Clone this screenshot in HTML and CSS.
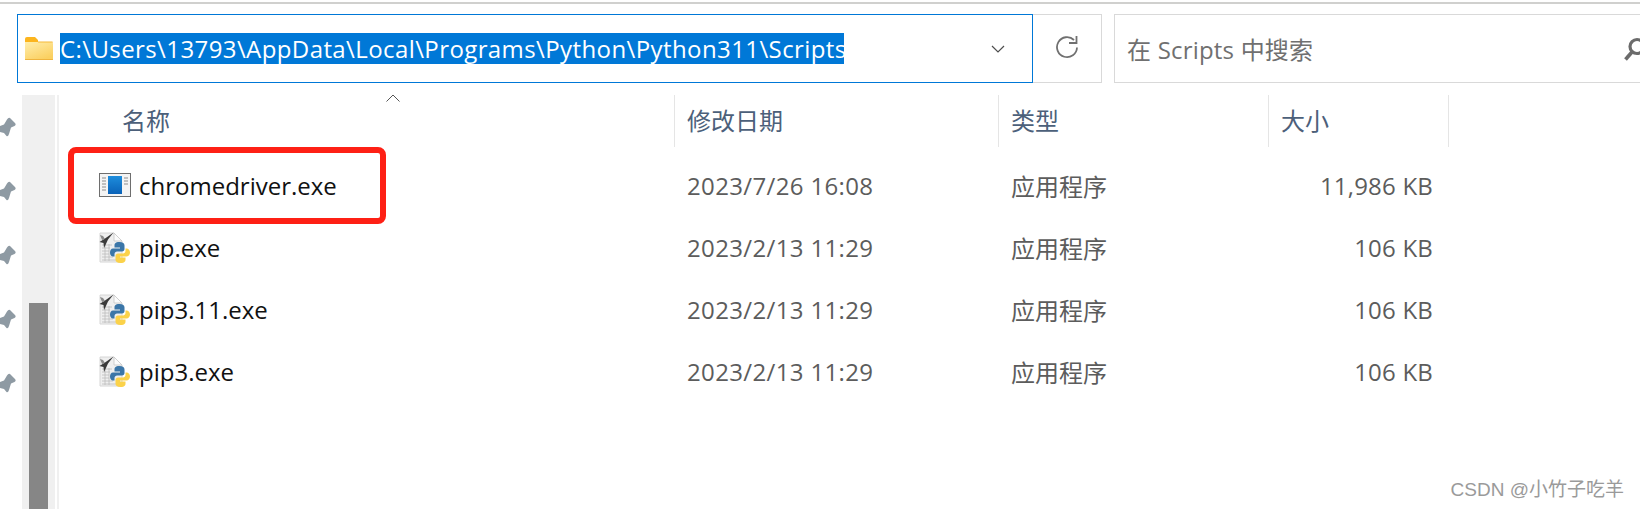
FILE: index.html
```html
<!DOCTYPE html>
<html lang="zh-CN">
<head>
    <meta charset="UTF-8">
    <meta name="viewport" content="width=device-width, initial-scale=1.0">
    <title>Scripts</title>
    <link rel="stylesheet" href="styles.css">
</head>
<body>
    <svg class="defs" width="0" height="0" aria-hidden="true">
        <defs>
            <linearGradient id="folder-fill" x1="0" y1="0" x2="0.6" y2="1">
                <stop offset="0" stop-color="#ffeeac"/>
                <stop offset="1" stop-color="#fbd061"/>
            </linearGradient>
            <linearGradient id="exe-fill" x1="0" y1="0" x2="0" y2="1">
                <stop offset="0" stop-color="#1e8ddc"/>
                <stop offset="1" stop-color="#0a62b8"/>
            </linearGradient>
            <symbol id="pin" viewBox="0 0 16 20">
                <path d="M0 9 L4 7.500 L7 2.500 Q8.500 0 10 1 L15 6 Q16.500 8 14.500 9 L11 10.500 L9 17 Q8 20 6.500 19 L4 16 L0 15 Z" fill="#8e9aa3"/>
            </symbol>
            <symbol id="py-icon" viewBox="0 0 31 31">
                <path d="M1 1 H15 L23 9 V30 H1 Z" fill="#efefef" stroke="#d6d6d6"/>
                <path d="M15 1 V9 H23 Z" fill="#fbfbfb" stroke="#c8c8c8" stroke-width="0.800"/>
                <path d="M3 13 H13 M3 16 H11 M3 19 H10 M3 22 H10 M3 25 H14 M3 28 H20 M6 12 V29 M10 12 V29" stroke="#bcbcbc" stroke-width="0.800"/>
                <path d="M0.500 10 L6 6.500 L14.500 0.500 L9 7.500 L6.500 13 L5 16 L4.500 11 Z" fill="#3a3a3a"/>
                <path d="M1 3 L4 4 L6 7 L3 8 Z" fill="#8a8a8a"/>
                <path d="M20.500 10 C16 10 15.500 12 15.500 13.500 V15.500 H21 V16.500 H14 C12 16.500 11 18.300 11 20.500 C11 22.700 12 24.500 14 24.500 H15.500 V22 C15.500 20.500 16.800 19.500 18 19.500 H23 C24.500 19.500 25.500 18.400 25.500 17 V13.500 C25.500 11.500 24 10 20.500 10 Z" fill="#3b76a8"/>
                <path d="M21.500 31 C26 31 26.500 29 26.500 27.500 V25.500 H21 V24.500 H27.500 C29.500 24.500 31 22.700 31 20.500 C31 18.300 29.500 16.500 27.500 16.500 H26.500 V19 C26.500 20.500 25.200 21.500 24 21.500 H19 C17.500 21.500 16.500 22.600 16.500 24 V27.500 C16.500 29.500 18 31 21.500 31 Z" fill="#fbd24a"/>
            </symbol>
        </defs>
    </svg>

    <div class="window">
        <div class="top-line"></div>

        <div class="toolbar">
            <div class="address-bar">
                <svg class="folder-icon" viewBox="0 0 28 23">
                    <path d="M0 2 Q0 0 2 0 H10 L13 3 V6 H0 Z" fill="#fcb51e"/>
                    <path d="M0 5 H26.500 Q28 5 28 6.500 V21.500 Q28 23 26.500 23 H1.500 Q0 23 0 21.500 Z" fill="url(#folder-fill)"/>
                    <path d="M13 4.500 H27 Q28 4.500 28 5.500 H13 Z" fill="#f5b93b"/>
                    <path d="M0 22 H28 V22.500 Q28 23 27 23 H1 Q0 23 0 22.500 Z" fill="#efb43e"/>
                </svg>
                <span class="path-text">C:\Users\13793\AppData\Local\Programs\Python\Python311\Scripts</span>
                <svg class="dropdown-icon" viewBox="0 0 14 8">
                    <path d="M1 1 L7 7 L13 1" fill="none" stroke="#4d4d4d" stroke-width="1.200"/>
                </svg>
            </div>
            <div class="refresh-box">
                <svg class="refresh-icon" viewBox="0 0 24 24">
                    <path d="M19 5 A10 10 0 1 0 22 12.500" fill="none" stroke="#707070" stroke-width="1.800"/>
                    <path d="M21.500 1 V8 H14" fill="none" stroke="#707070" stroke-width="1.800"/>
                </svg>
            </div>
            <div class="search-box">
                <span class="search-text">在 Scripts 中搜索</span>
                <svg class="search-icon" viewBox="0 0 24 24">
                    <circle cx="13" cy="9.500" r="7" fill="none" stroke="#6b6b6b" stroke-width="3.200"/>
                    <path d="M8 15 L1.500 22.500" stroke="#6b6b6b" stroke-width="3.600"/>
                </svg>
            </div>
        </div>

        <div class="main">
            <div class="pins">
                <svg class="pin"><use href="#pin"/></svg>
                <svg class="pin"><use href="#pin"/></svg>
                <svg class="pin"><use href="#pin"/></svg>
                <svg class="pin"><use href="#pin"/></svg>
                <svg class="pin"><use href="#pin"/></svg>
            </div>
            <div class="scrollbar"><div class="scroll-thumb"></div></div>

            <div class="list">
                <svg class="sort-arrow" viewBox="0 0 14 8">
                    <path d="M0.500 7.500 L7 1 L13.500 7.500" fill="none" stroke="#555" stroke-width="1"/>
                </svg>
                <div class="list-header">
                    <div class="head-cell name-head">名称</div>
                    <div class="head-cell">修改日期</div>
                    <div class="head-cell">类型</div>
                    <div class="head-cell">大小</div>
                </div>

                <div class="file-row">
                    <div class="file-name">
                        <svg class="exe-icon" viewBox="0 0 32 24">
                            <rect x="0.500" y="0.500" width="31" height="23" fill="#f4f4f4" stroke="#6e6e6e"/>
                            <rect x="9" y="3" width="14" height="18" fill="url(#exe-fill)"/>
                            <path d="M3 5 H7 M3 8 H7 M3 11 H7 M3 14 H7 M3 17 H7 M25 5 H29 M25 8 H29 M25 11 H29" stroke="#8c8c8c" stroke-width="1"/>
                        </svg>
                        <span>chromedriver.exe</span>
                    </div>
                    <div class="file-cell file-date">2023/7/26 16:08</div>
                    <div class="file-cell">应用程序</div>
                    <div class="file-cell file-size">11,986 KB</div>
                </div>
                <div class="file-row">
                    <div class="file-name">
                        <svg class="py-icon"><use href="#py-icon"/></svg>
                        <span>pip.exe</span>
                    </div>
                    <div class="file-cell file-date">2023/2/13 11:29</div>
                    <div class="file-cell">应用程序</div>
                    <div class="file-cell file-size">106 KB</div>
                </div>
                <div class="file-row">
                    <div class="file-name">
                        <svg class="py-icon"><use href="#py-icon"/></svg>
                        <span>pip3.11.exe</span>
                    </div>
                    <div class="file-cell file-date">2023/2/13 11:29</div>
                    <div class="file-cell">应用程序</div>
                    <div class="file-cell file-size">106 KB</div>
                </div>
                <div class="file-row">
                    <div class="file-name">
                        <svg class="py-icon"><use href="#py-icon"/></svg>
                        <span>pip3.exe</span>
                    </div>
                    <div class="file-cell file-date">2023/2/13 11:29</div>
                    <div class="file-cell">应用程序</div>
                    <div class="file-cell file-size">106 KB</div>
                </div>

                <!-- red annotation drawn over the first row -->
                <div class="highlight"></div>
            </div>
        </div>

        <div class="watermark">CSDN @小竹子吃羊</div>
    </div>
</body>
</html>
```

FILE: styles.css
```css
* {
    margin: 0;
    padding: 0;
    box-sizing: border-box;
    font-family: "Open Sans", "Noto Sans CJK SC", sans-serif;
}

body {
    background-color: white;
    overflow: hidden;
}

.defs {
    position: absolute;
}

.window {
    position: relative;
    width: 1640px;
    height: 509px;
    overflow: hidden;
    display: flex;
    flex-direction: column;
}

.top-line {
    height: 2px;
    margin-top: 2px;
    background-color: #d0d0ce;
}

/* Address bar, refresh and search */
.toolbar {
    display: flex;
    height: 69px;
    margin-top: 10px;
    padding-left: 17px;
    flex-shrink: 0;
}

.address-bar {
    width: 1016px;
    border: 1px solid #0078d7;
    display: flex;
    align-items: center;
    padding-left: 7px;
}

.folder-icon {
    width: 28px;
    height: 23px;
    margin-right: 7px;
    flex-shrink: 0;
}

.path-text {
    background-color: #0078d7;
    color: white;
    font-size: 24px;
    letter-spacing: 0.4px;
    line-height: 31px;
    white-space: nowrap;
    width: 784px;
}

.dropdown-icon {
    width: 14px;
    height: 8px;
    margin-left: 147px;
}

.refresh-box {
    width: 69px;
    border-top: 1px solid #d9d9d9;
    border-bottom: 1px solid #d9d9d9;
    border-right: 1px solid #d9d9d9;
    display: flex;
    align-items: center;
    justify-content: center;
}

.refresh-icon {
    width: 24px;
    height: 24px;
    margin-bottom: 4px;
}

.search-box {
    flex: 1;
    margin-left: 12px;
    border: 1px solid #d9d9d9;
    border-right: none;
    display: flex;
    align-items: center;
    justify-content: space-between;
    padding-left: 12px;
    overflow: hidden;
}

.search-text {
    color: #707070;
    font-size: 24px;
    letter-spacing: 0.2px;
}

.search-icon {
    width: 24px;
    height: 24px;
    margin-right: -8px;
}

/* Left strip and file list */
.main {
    display: flex;
    flex: 1;
    margin-top: 12px;
    min-height: 0;
}

.pins {
    width: 22px;
    padding-top: 22px;
    display: flex;
    flex-direction: column;
    gap: 44px;
}

.pin {
    width: 16px;
    height: 20px;
}

.scrollbar {
    width: 33px;
    padding-left: 7px;
    padding-top: 208px;
    background-color: #f0f0f0;
}

.scroll-thumb {
    width: 19px;
    height: 100%;
    background-color: #868686;
}

.list {
    position: relative;
    flex: 1;
    margin-left: 2px;
    border-left: 2px solid #f0f0f0;
}

.sort-arrow {
    position: absolute;
    left: 327px;
    top: -1px;
    width: 14px;
    height: 8px;
}

.list-header,
.file-row {
    display: grid;
    grid-template-columns: 616px 324px 270px 180px;
}

.list-header {
    height: 52px;
    margin-bottom: 7px;
}

.head-cell {
    color: #4c607a;
    font-size: 24px;
    line-height: 52px;
    padding-left: 12px;
    border-right: 1px solid #e5e5e5;
}

.name-head {
    padding-left: 63px;
}

.file-row {
    height: 62px;
    align-items: center;
    font-size: 24px;
}

.file-name {
    display: flex;
    align-items: center;
    padding-left: 40px;
    color: #111;
}

.exe-icon {
    width: 32px;
    height: 24px;
    margin-right: 8px;
}

.py-icon {
    width: 31px;
    height: 31px;
    margin-right: 9px;
}

.file-cell {
    color: #5c5c5c;
    padding-left: 12px;
}

.file-date {
    letter-spacing: 0.35px;
}

.file-size {
    text-align: right;
    padding-right: 16px;
    letter-spacing: 0.2px;
}

.highlight {
    position: absolute;
    left: 9px;
    top: 52px;
    width: 318px;
    height: 77px;
    border: 6px solid #fe2015;
    border-radius: 8px;
}

.watermark {
    position: absolute;
    right: 16px;
    bottom: 8px;
    color: #9a9a9a;
    font-size: 19px;
    font-family: "Liberation Sans", "Noto Sans CJK SC", sans-serif;
}
```
